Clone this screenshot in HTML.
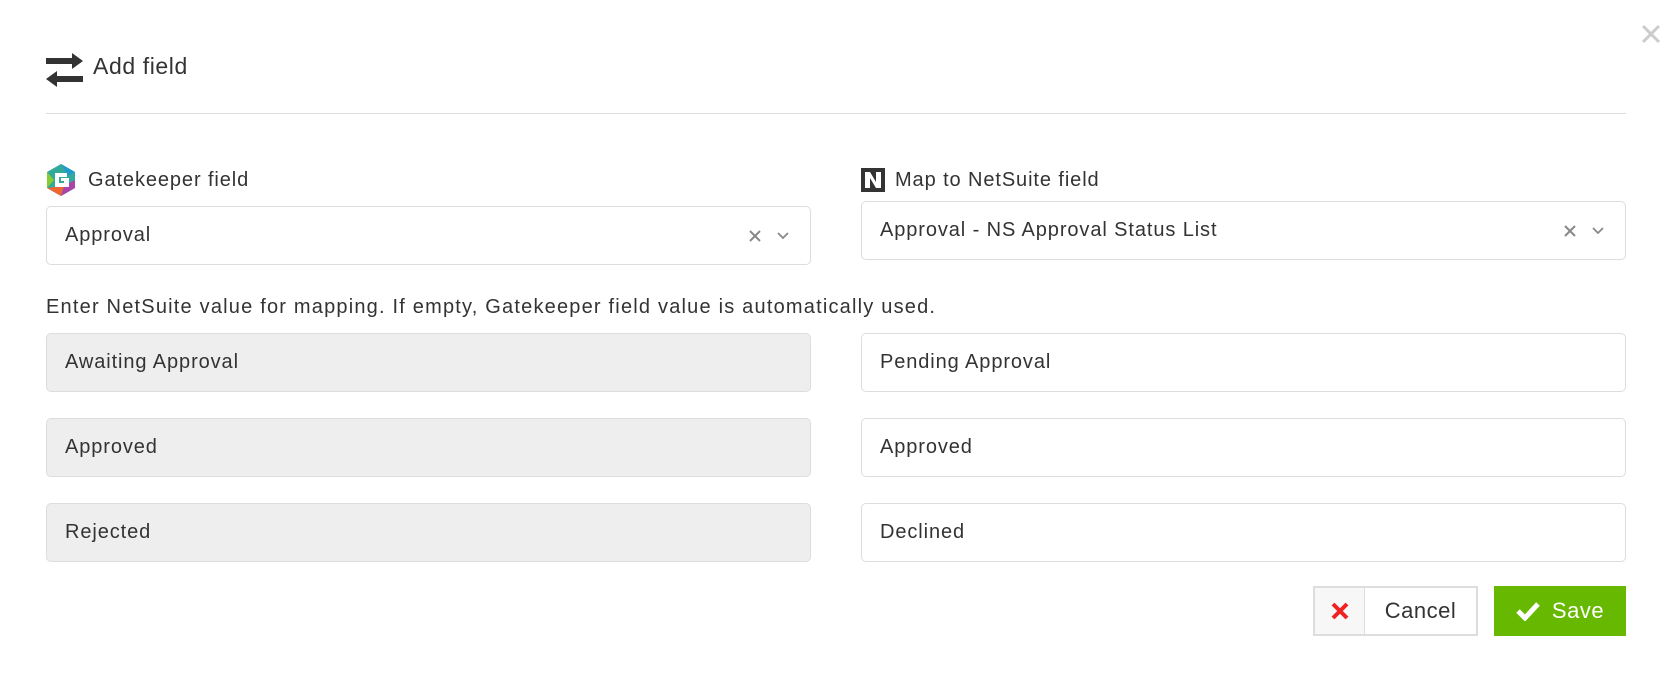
<!DOCTYPE html>
<html><head><style>
body{margin:0;width:1675px;height:679px;background:#fff;font-family:"Liberation Sans",sans-serif;color:#333;position:relative;overflow:hidden}
.a{position:absolute}
.box{position:absolute;border:1px solid #ddd;border-radius:5px;box-sizing:border-box;font-size:20px;letter-spacing:0.9px;color:#333;display:flex;align-items:center;padding-left:18px}
.g{background:#eee}
.lbl{font-size:20px;letter-spacing:0.9px;display:flex;align-items:center}
.sx{position:absolute;right:20px;top:50%;transform:translateY(-50%);color:#888;display:flex;gap:14px;align-items:center}
</style></head><body>
<svg class="a" style="left:1641px;top:24px" width="20" height="20" viewBox="0 0 20 20"><path d="M2 2l16 16M18 2L2 18" stroke="#ccc" stroke-width="3"/></svg>
<svg class="a" style="left:46px;top:53px" width="37" height="34" viewBox="0 0 37 34"><path d="M0 8h29M8 26h29" stroke="#333" stroke-width="6"/><path d="M26 0l11 8-11 8z M11 18L0 26l11 8z" fill="#333"/></svg>
<div class="a" style="left:93px;top:53px;font-size:23px;letter-spacing:0.6px;color:#333">Add field</div>
<div class="a" style="left:46px;top:113px;width:1580px;height:1px;background:#ddd"></div>
<div class="a lbl" style="left:46px;top:164px;height:32px">
<svg width="30" height="32" viewBox="0 0 30 32" style="margin-right:12px"><polygon points="15,0 29,8 29,24 15,32 1,24 1,8" fill="#3a9"/><path d="M15 0L29 8 22 12z" fill="#29c"/><path d="M29 16v8L15 32 18 22z" fill="#a4a"/><path d="M1 24l14 8 3-10z" fill="#e63"/><path d="M1 8v16l7-8z" fill="#8c3"/><path d="M9 9h12v4H13v6h5v-2h-3v-3h8v9H9z" fill="#fff"/></svg>Gatekeeper field</div>
<div class="box" style="left:46px;top:206px;width:765px;height:59px">Approval<div class="sx"><svg width="14" height="14" viewBox="0 0 14 14"><path d="M2 2l10 10M12 2L2 12" stroke="#888" stroke-width="2"/></svg><svg width="14" height="10" viewBox="0 0 14 10"><path d="M2 2l5 5 5-5" stroke="#888" stroke-width="1.8" fill="none"/></svg></div></div>
<div class="a lbl" style="left:861px;top:164px;height:32px">
<svg width="24" height="24" viewBox="0 0 24 24" style="margin-right:10px"><rect width="24" height="24" fill="#333"/><path d="M4 4h5l6 10V4h5v16h-5L9 10v10H4z" fill="#fff"/></svg>Map to NetSuite field</div>
<div class="box" style="left:861px;top:201px;width:765px;height:59px">Approval - NS Approval Status List<div class="sx"><svg width="14" height="14" viewBox="0 0 14 14"><path d="M2 2l10 10M12 2L2 12" stroke="#888" stroke-width="2"/></svg><svg width="14" height="10" viewBox="0 0 14 10"><path d="M2 2l5 5 5-5" stroke="#888" stroke-width="1.8" fill="none"/></svg></div></div>
<div class="a" style="left:46px;top:296px;font-size:20px;letter-spacing:1.2px">Enter NetSuite value for mapping. If empty, Gatekeeper field value is automatically used.</div>
<div class="box g" style="left:46px;top:333px;width:765px;height:59px">Awaiting Approval</div>
<div class="box" style="left:861px;top:333px;width:765px;height:59px">Pending Approval</div>
<div class="box g" style="left:46px;top:418px;width:765px;height:59px">Approved</div>
<div class="box" style="left:861px;top:418px;width:765px;height:59px">Approved</div>
<div class="box g" style="left:46px;top:503px;width:765px;height:59px">Rejected</div>
<div class="box" style="left:861px;top:503px;width:765px;height:59px">Declined</div>
<div class="a" style="left:1313px;top:586px;width:165px;height:50px;border:2px solid #ddd;box-sizing:border-box;display:flex">
<div style="width:49px;background:#f7f7f7;border-right:1px solid #ddd;display:flex;align-items:center;justify-content:center"><svg width="18" height="18" viewBox="0 0 18 18"><path d="M2 2l14 14M16 2L2 16" stroke="#e22" stroke-width="4"/></svg></div>
<div style="flex:1;display:flex;align-items:center;justify-content:center;font-size:22px;letter-spacing:0.5px">Cancel</div></div>
<div class="a" style="left:1494px;top:586px;width:132px;height:50px;background:#66b800;color:#fff;display:flex;align-items:center;justify-content:center;font-size:22px;letter-spacing:0.5px">
<svg width="24" height="20" viewBox="0 0 24 20" style="margin-right:12px"><path d="M2 10l7 7L22 3" stroke="#fff" stroke-width="5" fill="none"/></svg>Save</div>
</body></html>
